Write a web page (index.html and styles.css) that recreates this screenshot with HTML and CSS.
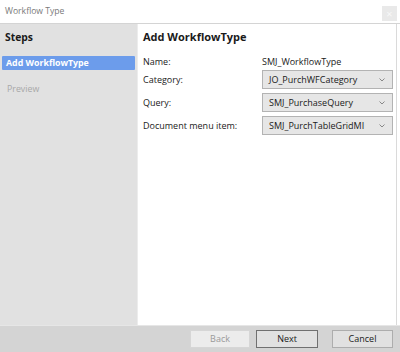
FILE: index.html
```html
<!DOCTYPE html>
<html>
<head>
<meta charset="utf-8">
<link rel="stylesheet" href="styles.css">
</head>
<body>
<div class="window">
  <div class="titlebar">
    <span class="title">Workflow Type</span>
    <span class="close">×</span>
  </div>
  <div class="main">
    <div class="sidebar">
      <div class="steps-head">Steps</div>
      <div class="step active">Add WorkflowType</div>
      <div class="step disabled">Preview</div>
    </div>
    <div class="content">
      <div class="heading">Add WorkflowType</div>
      <div class="form">
        <div class="row row-text">
          <span class="label">Name:</span>
          <span class="value">SMJ_WorkflowType</span>
        </div>
        <div class="row">
          <span class="label">Category:</span>
          <div class="select"><span>JO_PurchWFCategory</span><svg class="chev" width="6" height="4" viewBox="0 0 6 4"><path d="M0.5 0.5 L3 3 L5.5 0.5" fill="none" stroke="#888" stroke-width="1"/></svg></div>
        </div>
        <div class="row">
          <span class="label">Query:</span>
          <div class="select"><span>SMJ_PurchaseQuery</span><svg class="chev" width="6" height="4" viewBox="0 0 6 4"><path d="M0.5 0.5 L3 3 L5.5 0.5" fill="none" stroke="#888" stroke-width="1"/></svg></div>
        </div>
        <div class="row">
          <span class="label">Document menu item:</span>
          <div class="select"><span>SMJ_PurchTableGridMI</span><svg class="chev" width="6" height="4" viewBox="0 0 6 4"><path d="M0.5 0.5 L3 3 L5.5 0.5" fill="none" stroke="#888" stroke-width="1"/></svg></div>
        </div>
      </div>
    </div>
  </div>
  <div class="footer">
    <button class="btn disabled-btn">Back</button>
    <button class="btn next">Next</button>
    <button class="btn cancel">Cancel</button>
  </div>
</div>
</body>
</html>
```
FILE: styles.css
```css
html, body {
  margin: 0;
  padding: 0;
}
body {
  width: 400px;
  height: 352px;
  background: #ffffff;
  font-family: "Open Sans", "Noto Sans", sans-serif;
  font-size: 9px;
  color: #1a1a1a;
  overflow: hidden;
}
.window {
  width: 400px;
  height: 352px;
  display: flex;
  flex-direction: column;
}
.titlebar {
  height: 24px;
  box-sizing: border-box;
  border-bottom: 1px solid #d4d4d4;
  display: flex;
  align-items: flex-start;
  justify-content: space-between;
  padding: 0 3px 0 5px;
}
.title {
  color: #7a7a7a;
  font-size: 8.6px;
  line-height: 24px;
  margin-top: -1px;
}
.close {
  margin-top: 6px;
  width: 15px;
  height: 15px;
  background: #e9e9e9;
  color: #f8f8f8;
  font-size: 11px;
  line-height: 15px;
  text-align: center;
}
.main {
  flex: 1;
  display: flex;
  padding-right: 3px;
}
.sidebar {
  width: 139px;
  background: #e1e1e1;
  border-right: 1px solid #ececec;
  padding: 0 2px;
  box-sizing: border-box;
}
.steps-head {
  font-weight: bold;
  font-size: 10.3px;
  padding: 6px 3px 0;
  height: 27px;
  box-sizing: border-box;
}
.step {
  height: 14px;
  line-height: 14px;
  padding-left: 4px;
  font-size: 8.8px;
}
.step.active {
  background: #6c9ceb;
  color: #ffffff;
  font-weight: bold;
  border-radius: 1px;
  margin-top: 5px;
}
.step.disabled {
  color: #a8a8a8;
  margin-top: 12px;
  padding-left: 5px;
}
.content {
  flex: 1;
  background: #ffffff;
  border-right: 1px solid #dadada;
  padding: 0 3px 0 5px;
}
.heading {
  font-weight: bold;
  font-size: 11px;
  padding-top: 5px;
  height: 32px;
  box-sizing: border-box;
}
.form {
  display: flex;
  flex-direction: column;
  gap: 4px;
}
.row {
  display: grid;
  grid-template-columns: 119px 131px;
  align-items: center;
  height: 19px;
}
.row-text {
  height: 11px;
  margin-top: 0;
  margin-bottom: -1px;
}
.label, .value {
  line-height: 11px;
}
.select {
  height: 19px;
  box-sizing: border-box;
  border: 1px solid #b3b3b3;
  background: #e6e6e6;
  display: flex;
  align-items: center;
  justify-content: space-between;
  padding: 0 7px 0 6px;
}
.chev {
  display: block;
}
.footer {
  height: 27px;
  background: #d4d4d4;
  border-top: 1px solid #e6e6e6;
  box-sizing: border-box;
  display: flex;
  align-items: center;
  justify-content: flex-end;
  padding: 0 7px 1px 0;
}
.btn {
  height: 18px;
  box-sizing: border-box;
  font-family: "Open Sans", "Noto Sans", sans-serif;
  font-size: 9px;
  color: #1a1a1a;
  background: #e1e1e1;
  border: 1px solid #adadad;
  padding: 0;
  width: 61px;
  line-height: 16px;
}
.disabled-btn {
  background: #ececec;
  border-color: #d6d6d6;
  color: #9a9a9a;
  width: 60px;
}
.next {
  margin-left: 6px;
  width: 62px;
  border-color: #707070;
}
.cancel {
  margin-left: 14px;
}
```
